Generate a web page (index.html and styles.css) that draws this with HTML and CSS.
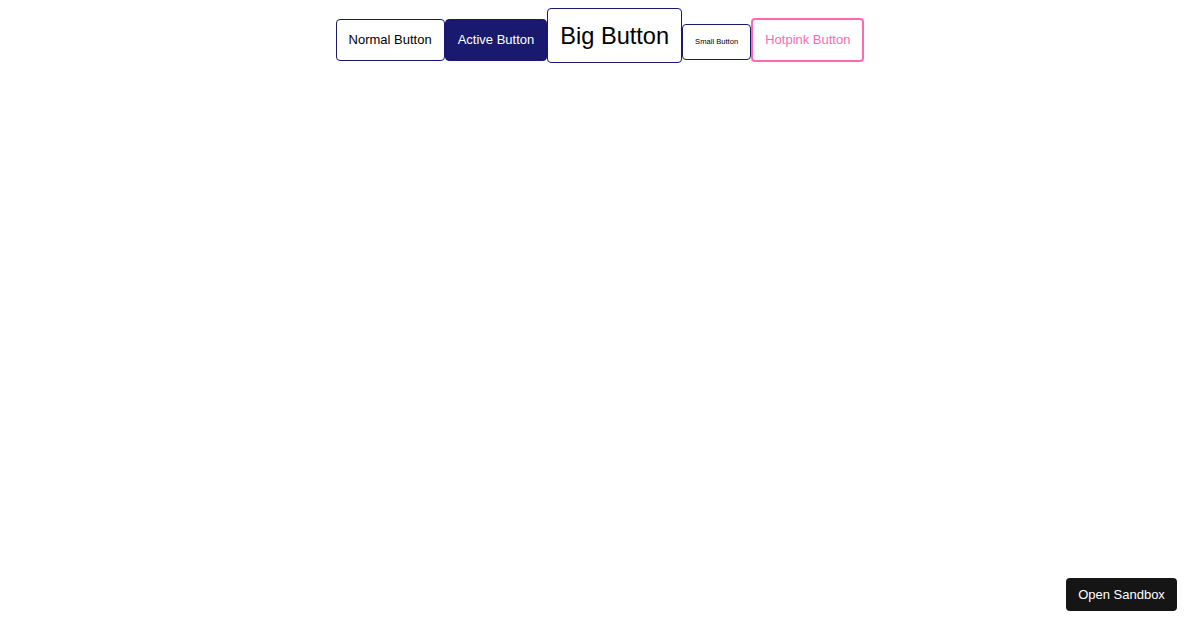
FILE: index.html
```html
<!DOCTYPE html>
<html>
<head>
<meta charset="utf-8">
<link rel="stylesheet" href="styles.css">
</head>
<body>
<div class="row">
  <button class="btn">Normal Button</button>
  <button class="btn active">Active Button</button>
  <button class="btn big">Big Button</button>
  <button class="btn small">Small Button</button>
  <button class="btn hotpink">Hotpink Button</button>
</div>
<button class="sandbox">Open Sandbox</button>
</body>
</html>
```

FILE: styles.css
```css
body {
  margin: 8px;
  background: #fff;
  font-family: "Liberation Sans", Arial, sans-serif;
}

.row {
  display: flex;
  justify-content: center;
  align-items: baseline;
}

.btn {
  font-family: "Liberation Sans", Arial, sans-serif;
  font-size: 13px;
  line-height: 16px;
  padding: 12px;
  margin: 0;
  background: #fff;
  color: #000;
  border: 1px solid #191970;
  border-radius: 4px;
}

.active {
  background: #191970;
  color: #fff;
}

.big {
  font-size: 23.6px;
  line-height: 29px;
  padding: 13px 12px 11px;
}

.small {
  font-size: 7.6px;
  line-height: 10px;
}

.hotpink {
  color: #ff69b4;
  border: 2px solid #ff69b4;
}

.sandbox {
  position: fixed;
  right: 23px;
  bottom: 19px;
  width: 111px;
  height: 33px;
  padding: 0;
  background: #151515;
  color: #fff;
  border: none;
  border-radius: 4px;
  font-family: "Liberation Sans", Arial, sans-serif;
  font-size: 13px;
}
```
